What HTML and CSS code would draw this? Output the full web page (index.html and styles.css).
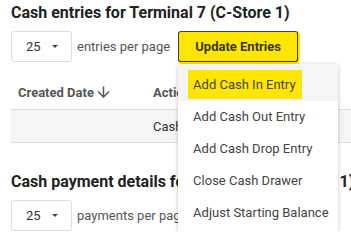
FILE: index.html
```html
<!DOCTYPE html>
<html lang="en">
<head>
    <meta charset="UTF-8">
    <meta name="viewport" content="width=device-width, initial-scale=1.0">
    <title>Cash Entries</title>
    <link rel="stylesheet" href="styles.css">
</head>
<body>

<div class="page">
    <!-- Cash entries -->
    <section class="block">
        <h2 class="title">Cash entries for Terminal 7 (C-Store 1)</h2>
        <div class="controls">
            <div class="select">25 <span class="caret"></span></div>
            <span class="per-page">entries per page</span>
            <div class="actions">
                <button class="update">Update Entries</button>
                <ul class="menu">
                    <li class="active"><span class="mark">Add Cash In Entry</span></li>
                    <li>Add Cash Out Entry</li>
                    <li>Add Cash Drop Entry</li>
                    <li>Close Cash Drawer</li>
                    <li>Adjust Starting Balance</li>
                </ul>
            </div>
        </div>
        <table class="entries">
            <thead>
                <tr>
                    <th class="col-date">
                        Created Date
                        <svg class="arrow" width="13" height="12" viewBox="0 0 13 12">
                            <path d="M6.5 0.5 V11 M1 5.5 L6.5 11 L12 5.5" fill="none" stroke="#555" stroke-width="1.5"/>
                        </svg>
                    </th>
                    <th>Action</th>
                </tr>
            </thead>
            <tbody>
                <tr>
                    <td class="col-date"></td>
                    <td>Cash In</td>
                </tr>
            </tbody>
        </table>
    </section>

    <!-- Cash payments -->
    <section class="block second">
        <h2 class="title">Cash payment details for Terminal 7 (C-Store 1)</h2>
        <div class="controls">
            <div class="select">25 <span class="caret"></span></div>
            <span class="per-page">payments per page</span>
        </div>
    </section>
</div>

</body>
</html>
```

FILE: styles.css
```css
body {
    font-family: Roboto, 'Liberation Sans', sans-serif;
    margin: 0;
    padding: 0;
    background-color: #fff;
    color: #333;
    overflow: hidden;
}
.page {
    padding: 3px 0 0 11px;
    white-space: nowrap;
}
.title {
    margin: 0;
    font-size: 16px;
    line-height: 20px;
    font-weight: 700;
    color: #222;
}
.controls {
    display: flex;
    align-items: center;
    margin-top: 8px;
    height: 31px;
}
.select {
    box-sizing: border-box;
    width: 61px;
    height: 31px;
    border: 1px solid #ddd;
    border-radius: 3px;
    display: flex;
    align-items: center;
    padding-left: 14px;
    font-size: 13px;
    color: #333;
}
.caret {
    margin-left: 11px;
    width: 0;
    height: 0;
    border-left: 3px solid transparent;
    border-right: 3px solid transparent;
    border-top: 3px solid #444;
}
.per-page {
    margin-left: 5px;
    font-size: 13px;
    color: #555;
}
.actions {
    position: relative;
    margin-left: 8px;
}
.update {
    box-sizing: border-box;
    width: 120px;
    height: 31px;
    padding: 0;
    background-color: #ffe600;
    border: 1px solid #3a3a2a;
    border-top-color: #34406e;
    border-radius: 3px;
    font-family: inherit;
    font-size: 13px;
    font-weight: 700;
    color: #383810;
    box-shadow: 1px 1px 0 1px #ffe600;
}
.menu {
    position: absolute;
    top: 33px;
    left: 0;
    width: 160px;
    margin: 0;
    padding: 0 0 7px;
    list-style: none;
    background: #fff;
    border-radius: 3px;
    box-shadow: 0 1px 4px rgba(0, 0, 0, 0.25);
    z-index: 2;
}
.menu li {
    height: 32px;
    line-height: 32px;
    padding-left: 15px;
    font-size: 13px;
    color: #444;
}
.menu li.active {
    box-sizing: border-box;
    background-color: #f5f5f5;
    height: 37px;
    line-height: 29px;
    padding: 6px 0 0 10px;
}
.menu .mark {
    display: inline-block;
    background-color: #ffe600;
    padding: 0 6px 0 5px;
}
.entries {
    margin-top: 14px;
    width: 340px;
    border-collapse: collapse;
    font-size: 13px;
}
.entries th {
    text-align: left;
    height: 33px;
    padding: 0 7px;
    color: #555;
    font-weight: 700;
    border-bottom: 1px solid #ddd;
}
.entries td {
    height: 32px;
    padding: 0 7px;
    background-color: #f5f5f5;
    color: #333;
    border-bottom: 1px solid #ddd;
}
.entries .col-date {
    width: 121px;
}
.arrow {
    vertical-align: -1px;
}
.second {
    margin-top: 29px;
}
```
